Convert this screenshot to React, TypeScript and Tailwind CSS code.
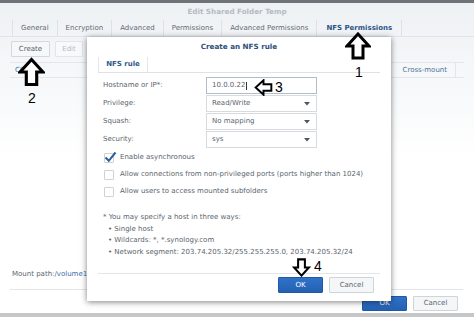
import React from "react";

const UpArrow = ({ className }: { className: string }) => (
  <svg className={className} viewBox="0 0 26 28" fill="none">
    <path d="M13 2 L24 14 L18 14 L18 26 L8 26 L8 14 L2 14 Z" fill="#fff" stroke="#000" strokeWidth="3" strokeLinejoin="miter" />
  </svg>
);

const Caret = () => (
  <svg width="6" height="4" viewBox="0 0 6 4" className="absolute right-[6px] top-[6px]">
    <path d="M0 0 L6 0 L3 3.5 Z" fill="#50585f" />
  </svg>
);

const Select = ({ value }: { value: string }) => (
  <div className="relative w-[111px] h-[17px] border border-[#d7dbe0] bg-white flex items-center pl-[5px] text-[#5a646e]">
    {value}
    <Caret />
  </div>
);

const Check = ({ checked, label }: { checked?: boolean; label: string }) => (
  <div className="flex items-center h-[17px]">
    <div className="relative w-[10px] h-[10px] border border-[#cdd2d7] bg-white rounded-[1px] ml-[17px]">
      {checked && (
        <svg className="absolute left-[-1px] top-[-3px]" width="13" height="12" viewBox="0 0 13 12">
          <path d="M1.5 6.5 L4.8 9.8 L11.5 1.5" stroke="#2f5f9f" strokeWidth="2" fill="none" />
        </svg>
      )}
    </div>
    <span className="ml-[6px] text-[#5a646e]">{label}</span>
  </div>
);

export default function App() {
  const tabs = ["General", "Encryption", "Advanced", "Permissions", "Advanced Permissions"];
  return (
    <div className="relative w-[474px] h-[317px] overflow-hidden bg-white font-['DejaVu_Sans',sans-serif] text-[7px] leading-none text-[#5a646e]">
      <div className="h-[3px] bg-[#6d7378]" />
      <div className="h-[310px] flex flex-col bg-gradient-to-b from-[#eef1f4] via-white to-white">
        <div className="h-[17px] flex items-center justify-center font-bold text-[#b3bcc5] text-[7.2px]">
          Edit Shared Folder Temp
        </div>
        <div className="h-[17px] flex border-b border-[#dfe4ea] pl-[12px]">
          {tabs.map((t) => (
            <div key={t} className="h-full flex items-center px-[8px] border-l border-[#dde2e7] text-[#5f6a75]">
              {t}
            </div>
          ))}
          <div className="h-full flex items-center px-[9px] border-x border-[#dde2e7] font-bold text-[#2d5585]">
            NFS Permissions
          </div>
        </div>
        <div className="mt-[4px] h-[16px] flex gap-[5px] px-[11px]">
          <div className="w-[39px] h-full border border-[#d3d8dd] bg-[#f6f7f8] flex items-center justify-center text-[#59636d] rounded-[1px]">
            Create
          </div>
          <div className="w-[28px] h-full border border-[#e2e5e8] bg-[#f8f9fa] flex items-center justify-center text-[#b5bcc3] rounded-[1px]">
            Edit
          </div>
        </div>
        <div className="mt-[5px] mx-[10px] h-[16px] border-y border-[#e3e7eb] flex items-center">
          <div className="flex-1 pl-[5px] text-[#4f74a0]">Client</div>
          <div className="h-full flex items-center px-[8px] border-r border-[#e3e7eb] text-[#4f74a0]">Cross-mount</div>
          <div className="w-[8px]" />
        </div>
        <div className="h-[189px]" />
        <div className="h-[14px] flex items-center pl-[12px] text-[#5a646e]">
          Mount path:<span className="text-[#3d6fa8]">/volume1</span>
        </div>
        <div className="mt-[8px] ml-[10px] mr-[11px] border-t border-[#e2e6ea]" />
        <div className="mt-[6px] h-[15px] flex justify-end gap-[6px] pr-[16px]">
          <div className="w-[45px] h-full bg-gradient-to-b from-[#2f72c8] to-[#2461b3] border border-[#1f58a4] flex items-center justify-center text-white rounded-[1px]">
            OK
          </div>
          <div className="w-[45px] h-full bg-[#f5f6f7] border border-[#cfd4d9] flex items-center justify-center text-[#5a646e] rounded-[1px]">
            Cancel
          </div>
        </div>
      </div>
      <div className="h-[4px] bg-[#c5c7c9]" />

      {/* Dialog */}
      <div className="absolute left-[87px] top-[37px] w-[304px] h-[264px] bg-white shadow-[0_1px_6px_rgba(0,0,0,0.5)] flex flex-col">
        <div className="h-[20px] flex items-center justify-center font-bold text-[#2f5078] text-[7.2px]">
          Create an NFS rule
        </div>
        <div className="mx-[11px] h-[16px] border-b border-[#dde2e7] flex">
          <div className="w-[50px] h-full border-x border-[#e3e7eb] flex items-center justify-center font-bold text-[#2f5a8c]">
            NFS rule
          </div>
        </div>
        <div className="mt-[4px] flex flex-col gap-[1px] pl-[16px]">
          <div className="flex items-center h-[17px]">
            <div className="w-[103px]">Hostname or IP*:</div>
            <div className="w-[111px] h-[17px] border border-[#b3bdc8] bg-white flex items-center pl-[5px] text-[#5a646e]">
              10.0.0.22<span className="inline-block w-[1px] h-[8px] bg-[#333] ml-[1px]" />
            </div>
          </div>
          <div className="flex items-center h-[17px]">
            <div className="w-[103px]">Privilege:</div>
            <Select value="Read/Write" />
          </div>
          <div className="flex items-center h-[17px]">
            <div className="w-[103px]">Squash:</div>
            <Select value="No mapping" />
          </div>
          <div className="flex items-center h-[17px]">
            <div className="w-[103px]">Security:</div>
            <Select value="sys" />
          </div>
        </div>
        <div className="mt-[1px] flex flex-col">
          <Check checked label="Enable asynchronous" />
          <Check label="Allow connections from non-privileged ports (ports higher than 1024)" />
          <Check label="Allow users to access mounted subfolders" />
        </div>
        <div className="mt-[12px] pl-[16px] flex flex-col leading-[11.5px] text-[#5a646e]">
          <div>* You may specify a host in three ways:</div>
          <div className="pl-[5px]">• Single host</div>
          <div className="pl-[5px]">• Wildcards: *, *.synology.com</div>
          <div className="pl-[5px]">• Network segment: 203.74.205.32/255.255.255.0, 203.74.205.32/24</div>
        </div>
        <div className="mt-[15px] mx-[11px] border-t border-[#e2e6ea]" />
        <div className="mt-[3px] h-[16px] flex justify-end gap-[6px] pr-[17px]">
          <div className="w-[45px] h-full bg-gradient-to-b from-[#2f72c8] to-[#2461b3] border border-[#1f58a4] flex items-center justify-center text-white rounded-[1px]">
            OK
          </div>
          <div className="w-[45px] h-full bg-[#f5f6f7] border border-[#cfd4d9] flex items-center justify-center text-[#5a646e] rounded-[1px]">
            Cancel
          </div>
        </div>
      </div>

      {/* Annotations */}
      <UpArrow className="absolute left-[345px] top-[32px] w-[26px] h-[28px]" />
      <div className="absolute left-[355px] top-[65px] font-['Liberation_Sans',sans-serif] text-[14px] leading-none text-black">1</div>
      <UpArrow className="absolute left-[18px] top-[57px] w-[27px] h-[30px]" />
      <div className="absolute left-[28px] top-[91px] font-['Liberation_Sans',sans-serif] text-[14px] leading-none text-black">2</div>
      <UpArrow className="absolute left-[255px] top-[77px] w-[17px] h-[21px] -rotate-90 origin-center" />
      <div className="absolute left-[275px] top-[80px] font-['Liberation_Sans',sans-serif] text-[14px] leading-none text-black">3</div>
      <UpArrow className="absolute left-[292px] top-[258px] w-[19px] h-[19px] rotate-180" />
      <div className="absolute left-[314px] top-[259px] font-['Liberation_Sans',sans-serif] text-[14px] leading-none text-black">4</div>
    </div>
  );
}
